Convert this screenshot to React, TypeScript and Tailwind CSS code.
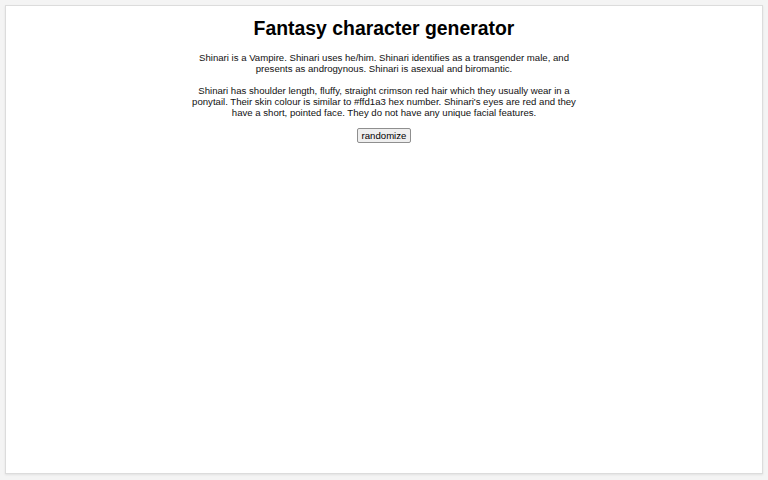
import React, { useState } from 'react'

const names = ['Shinari', 'Aeloria', 'Kaedric', 'Morwen']

const App = () => {
    const [name] = useState(names[0]);

    return (
        <div className="w-full h-screen bg-[#f4f4f4] p-[5px] font-['Liberation_Sans',Arial,sans-serif] text-black">
            <div className="w-full h-[469px] bg-white border border-[#dcdcdc] shadow-[0_1px_2px_rgba(0,0,0,0.08)]">
                <div className="flex flex-col items-center pt-[9px]">
                    <h1 className="text-[19.4px] leading-[26px] font-bold">Fantasy character generator</h1>
                    <div className="w-[392px] mt-[11px] text-center text-[9.6px] leading-[11px] text-[#111]">
                        <p>
                            {name} is a Vampire. {name} uses he/him. {name} identifies as a transgender male, and presents as androgynous. {name} is asexual and biromantic.
                        </p>
                        <p className="mt-[11px]">
                            {name} has shoulder length, fluffy, straight crimson red hair which they usually wear in a ponytail. Their skin colour is similar to #ffd1a3 hex number. {name}'s eyes are red and they have a short, pointed face. They do not have any unique facial features.
                        </p>
                    </div>
                    <button
                        type="button"
                        className="mt-[10px] px-[4px] h-[15px] text-[9.6px] leading-[13px] bg-[#efefef] border border-[#8f8f8f] rounded-[2px]"
                    >
                        randomize
                    </button>
                </div>
            </div>
        </div>
    )
}

export default App
